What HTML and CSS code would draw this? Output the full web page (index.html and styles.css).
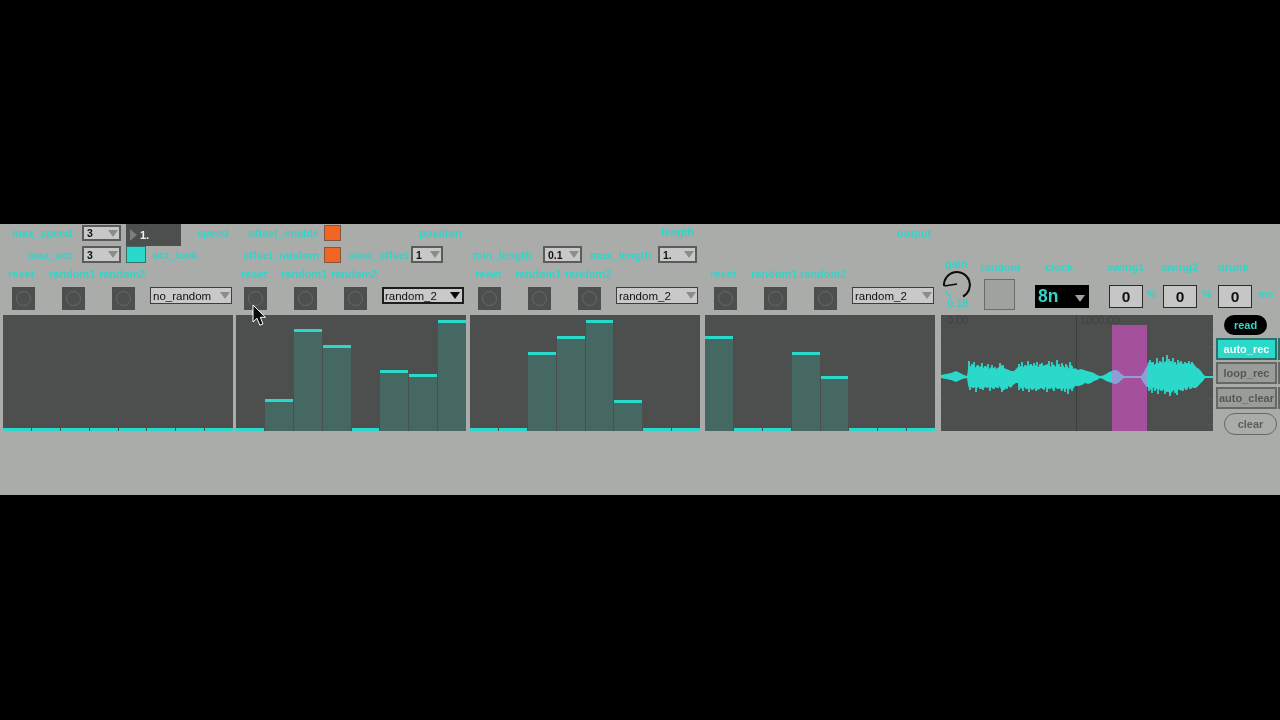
FILE: index.html
```html
<!DOCTYPE html>
<html lang="en">
<head>
<meta charset="utf-8">
<title>Sequencer patch</title>
<link rel="stylesheet" href="styles.css">
</head>
<body>
<main class="panel">
  <section class="seq s1">
    <div class="row-a">
      <span class="lab end">max_speed</span>
      <div class="sel small"><b>3</b><i class="arrow"></i></div>
      <div class="flonum"><i class="flo-tri"></i><b>1.</b></div>
      <span class="lab">speed</span>
    </div>
    <div class="row-b">
      <span class="lab end">max_oct</span>
      <div class="sel small"><b>3</b><i class="arrow"></i></div>
      <div class="toggle-on"></div>
      <span class="lab">oct_lock</span>
    </div>
    <div class="row-c"><span class="lab r0">reset</span><span class="lab r1">random1</span><span class="lab">random2</span></div>
    <div class="row-d">
      <div class="bang"><i></i></div><div class="bang"><i></i></div><div class="bang"><i></i></div>
      <div class="menu"><span>no_random</span><i class="arrow"></i></div>
    </div>
    <div class="chart">
      <div class="bar" style="height:3px"></div><div class="bar" style="height:3px"></div><div class="bar" style="height:3px"></div><div class="bar" style="height:3px"></div>
      <div class="bar" style="height:3px"></div><div class="bar" style="height:3px"></div><div class="bar" style="height:3px"></div><div class="bar" style="height:3px"></div>
    </div>
  </section>

  <section class="seq s2">
    <div class="row-a">
      <span class="lab end">offset_enable</span>
      <div class="orange"></div>
      <span class="lab">position</span>
    </div>
    <div class="row-b">
      <span class="lab end">offset_random</span>
      <div class="orange"></div>
      <span class="lab">slow_offset</span>
      <div class="sel tiny"><b>1</b><i class="arrow"></i></div>
    </div>
    <div class="row-c"><span class="lab r0">reset</span><span class="lab r1">random1</span><span class="lab">random2</span></div>
    <div class="row-d">
      <div class="bang"><i></i></div><div class="bang"><i></i></div><div class="bang"><i></i></div>
      <div class="menu active"><span>random_2</span><i class="arrow"></i></div>
    </div>
    <div class="chart">
      <div class="bar" style="height:3px"></div><div class="bar" style="height:32px"></div><div class="bar" style="height:102px"></div><div class="bar" style="height:86px"></div>
      <div class="bar" style="height:3px"></div><div class="bar" style="height:61px"></div><div class="bar" style="height:57px"></div><div class="bar" style="height:111px"></div>
    </div>
  </section>

  <section class="seq s3">
    <div class="row-a"><span class="lab">length</span></div>
    <div class="row-b">
      <span class="lab">min_length</span>
      <div class="sel small"><b>0.1</b><i class="arrow"></i></div>
      <span class="lab">max_length</span>
      <div class="sel small"><b>1.</b><i class="arrow"></i></div>
    </div>
    <div class="row-c"><span class="lab r0">reset</span><span class="lab r1">random1</span><span class="lab">random2</span></div>
    <div class="row-d">
      <div class="bang"><i></i></div><div class="bang"><i></i></div><div class="bang"><i></i></div>
      <div class="menu"><span>random_2</span><i class="arrow"></i></div>
    </div>
    <div class="chart">
      <div class="bar" style="height:3px"></div><div class="bar" style="height:3px"></div><div class="bar" style="height:79px"></div><div class="bar" style="height:95px"></div>
      <div class="bar" style="height:111px"></div><div class="bar" style="height:31px"></div><div class="bar" style="height:3px"></div><div class="bar" style="height:3px"></div>
    </div>
  </section>

  <section class="seq s4">
    <div class="row-a"><span class="lab">output</span></div>
    <div class="row-b"></div>
    <div class="row-c"><span class="lab r0">reset</span><span class="lab r1">random1</span><span class="lab">random2</span></div>
    <div class="row-d">
      <div class="bang"><i></i></div><div class="bang"><i></i></div><div class="bang"><i></i></div>
      <div class="menu"><span>random_2</span><i class="arrow"></i></div>
    </div>
    <div class="chart">
      <div class="bar" style="height:95px"></div><div class="bar" style="height:3px"></div><div class="bar" style="height:3px"></div><div class="bar" style="height:79px"></div>
      <div class="bar" style="height:55px"></div><div class="bar" style="height:3px"></div><div class="bar" style="height:3px"></div><div class="bar" style="height:3px"></div>
    </div>
  </section>

  <section class="master">
    <div class="strip">
      <div class="gain">
        <span class="lab">gain</span>
        <svg class="dial" viewBox="0 0 30 30" width="30" height="30" aria-hidden="true">
          <path d="M3.6 20.5A13 13 0 0 0 9 27" fill="none" stroke="#35d3c8" stroke-width="1.6"/>
          <path d="M2 16A13 13 0 1 1 21 26.5" fill="none" stroke="#0b0b0b" stroke-width="2"/>
          <path d="M2.5 16L15 14" stroke="#0b0b0b" stroke-width="1.6"/>
        </svg>
        <span class="lab val">0.18</span>
      </div>
      <div class="col">
        <span class="lab">random</span>
        <div class="rand-btn"></div>
      </div>
      <div class="col">
        <span class="lab clock-lab">clock</span>
        <div class="clock"><span>8n</span><i class="arrow"></i></div>
      </div>
      <div class="col"><span class="lab">swing1</span><div class="num inset">0</div></div>
      <span class="lab unit">%</span>
      <div class="col"><span class="lab">swing2</span><div class="num inset">0</div></div>
      <span class="lab unit">%</span>
      <div class="col"><span class="lab">drunk</span><div class="num">0</div></div>
      <span class="lab unit">ms</span>
    </div>
    <div class="lower">
      <svg class="wave" viewBox="0 0 272 116" width="272" height="116" aria-hidden="true">
        <defs>
          <g id="wf">
            <polygon points="0,60 5,59 10,58 15,56 19,58 23,60 26,61 27,54 28,49 30,52 32,50 34,53 36,50 38,52 40,51 43,53 45,51 48,54 50,52 53,53 55,54 58,52 60,50 62,52 65,54 68,55 70,56 73,56 75,54 77,52 80,51 83,52 85,50 87,52 89,49 91,51 94,50 97,52 100,49 102,51 104,50 107,49 110,52 112,49 114,52 117,49 119,52 122,50 124,53 126,50 128,54 130,49 132,54 134,53 137,55 140,54 143,55 146,56 150,57 153,58 156,60 159,61 162,60.5 165,59 168,57 171,56 174,55 177,56 180,59 183,61 200,61 201,60 203,57 205,53 206,52 207,47 209,48 211,47 213,50 215,48 218,48 221,47 223,50 225,45 227,48 229,46 231,49 233,47 235,50 237,47 240,48 243,49 246,48 249,49 252,48 255,52 258,54 260,56 262,59 264,61 272,61 272,63 264,63 262,66 260,68 258,70 255,73 252,72 250,74 248,71 246,75 243,73 240,76 238,74 235,78 233,75 231,77 229,79 227,76 225,77 222,74 220,76 217,73 214,75 212,72 210,75 207,72 206,72 205,71 203,68 201,65 200,63 183,63 180,65 177,68 174,69 171,68 168,67 165,66 162,64 159,63 156,65 153,66 150,68 147,69 144,68 141,70 138,71 134,71 132,74 130,72 128,75 126,73 124,76 122,73 120,75 118,73 116,74 114,72 112,75 110,72 107,74 105,72 102,74 100,73 97,75 94,73 92,75 89,73 86,74 83,72 80,74 77,68 75,68 72,70 70,73 67,71 64,74 62,75 60,74 58,71 56,73 54,72 52,74 50,72 48,73 46,71 43,73 41,74 38,72 36,73 34,72 32,73 30,72 28,73 27,70 26,63 23,63.5 19,65 15,67 10,65 5,64 0,63"/>
            <path class="wf-spikes" d="M28 46V56M31 49V56M33 47V56M37 50V56M41 48V56M44 51V56M47 49V56M51 50V56M54 52V56M59 48V56M62 50V56M78 49V56M81 47V56M84 50V56M87 46V56M90 49V56M93 48V56M96 47V56M99 49V56M101 48V56M105 50V56M108 46V56M111 47V56M113 50V56M116 45V56M118 49V56M121 48V56M125 49V56M129 47V56M131 51V56M209 45V56M212 47V56M216 43V56M219 46V56M222 42V56M224 47V56M226 40V56M228 44V56M230 46V56M232 43V56M234 47V56M237 45V56M240 46V56M244 47V56M248 46V56M251 47V56M29 68V75M32 68V73M35 68V77M39 68V74M42 68V75M46 68V73M49 68V76M53 68V74M57 68V73M61 68V77M63 68V75M66 68V74M78 68V75M82 68V76M85 68V74M88 68V77M91 68V75M95 68V76M98 68V74M103 68V75M106 68V77M109 68V74M113 68V76M117 68V74M121 68V76M124 68V77M127 68V79M129 68V74M131 68V76M208 68V76M211 68V78M214 68V76M217 68V79M221 68V76M224 68V79M227 68V77M229 68V81M231 68V76M234 68V78M236 68V80M239 68V75M242 68V76M245 68V75M249 68V74M253 68V73"/>
          </g>
          <clipPath id="sel"><rect x="171" y="10" width="35" height="106"/></clipPath>
        </defs>
        <rect width="272" height="116" fill="#4c4f4d"/>
        <path d="M0 19h5M0 32h5M0 45h5M0 58h5M0 71h5M0 84h5M0 97h5M0 110h5M267 19h5M267 32h5M267 45h5M267 58h5M267 71h5M267 84h5M267 97h5M267 110h5" stroke="#565957"/>
        <path d="M135.500 0V116" stroke="#3c3f3d"/>
        <text x="6" y="9" class="wave-t">0.00</text>
        <text x="139" y="9" class="wave-t">1000.00</text>
        <rect x="171" y="10" width="35" height="106" fill="#a5509c"/>
        <use href="#wf" class="wf-main"/>
        <use href="#wf" class="wf-sel" clip-path="url(#sel)"/>
      </svg>
      <div class="side">
        <div class="read">read</div>
        <div class="tog-row"><div class="tog on">auto_rec</div><i class="peek on"></i></div>
        <div class="tog-row"><div class="tog">loop_rec</div><i class="peek"></i></div>
        <div class="tog-row"><div class="tog">auto_clear</div><i class="peek"></i></div>
        <div class="clear">clear</div>
      </div>
    </div>
  </section>

  <svg class="cursor" viewBox="0 0 15 23" width="15" height="23" aria-hidden="true">
    <path d="M1 1V18L5 14.300L7.800 21.200L11 20L8.300 13.300H13.500Z" fill="#0b0b0b" stroke="#fff" stroke-width="1"/>
  </svg>
</main>
</body>
</html>
```
FILE: styles.css
```css
* { box-sizing: border-box; }
html, body { margin: 0; height: 100%; }
body { background: #000; overflow: hidden; font-family: "Liberation Sans", Arial, sans-serif; }

.panel {
  position: relative;
  display: flex;
  width: 1280px;
  height: 271px;
  margin-top: 224px;
  padding-left: 3px;
  background: #aaacaa;
  overflow: hidden;
  filter: blur(0.35px);
}

.lab {
  font-size: 11px;
  font-weight: 700;
  color: #35d3c8;
  white-space: nowrap;
  line-height: 18px;
}
.end { justify-self: end; padding-right: 5px; }

.seq { display: flex; flex-direction: column; flex: none; }
.s1 { width: 233px; }
.s2 { width: 234px; }
.s3 { width: 235px; }
.s4 { width: 236px; }

.row-a, .row-b { display: grid; align-items: start; }
.row-a { height: 22px; }
.row-b { height: 18px; }
.row-c { display: flex; height: 23px; padding: 1px 0 0 5px; }
.row-d { display: flex; height: 28px; gap: 27px; padding-left: 8px; align-items: flex-start; }
.r0 { width: 40px; }
.r1 { width: 50px; }

.s1 .row-a { grid-template-columns: 79px 44px 71px auto; }
.s1 .row-a .end, .s1 .row-b .end { padding-right: 10px; }
.s1 .row-b { grid-template-columns: 79px 44px 27px auto; }
.s1 .row-c .r0, .s4 .row-c .r0 { width: 41px; }
.s1 .row-d, .s4 .row-d { padding-left: 9px; }
.s4 .row-c .r1 { width: 49px; }

.s2 .row-a { grid-template-columns: 88px 95px auto; }
.s2 .row-b { grid-template-columns: 88px 24px 63px auto; }

.s3 .row-a { padding-left: 191px; }
.s3 .row-a .lab { line-height: 16px; }
.s3 .row-b { grid-template-columns: 70px 47px 68px auto; padding-left: 3px; }
.s4 .row-a { padding-left: 192px; }

.sel {
  display: flex;
  align-items: center;
  justify-content: space-between;
  height: 17px;
  padding: 0 1px 0 3px;
  background: #c8c8c8;
  border: 2px solid #5a5c5a;
  font-size: 10.5px;
  color: #111;
}
.small { width: 39px; }
.tiny { width: 32px; }
.row-a .sel { height: 16px; margin-top: 1px; }

.arrow {
  display: block;
  width: 0;
  height: 0;
  border-left: 5px solid transparent;
  border-right: 5px solid transparent;
  border-top: 7px solid #8b8d8b;
}

.flonum {
  display: flex;
  align-items: center;
  gap: 3px;
  width: 55px;
  height: 22px;
  padding: 0 0 1px 4px;
  background: #4c4f4d;
  color: #f2f2f2;
  font-size: 11px;
}
.flo-tri {
  width: 0;
  height: 0;
  border-top: 6px solid transparent;
  border-bottom: 6px solid transparent;
  border-left: 7px solid #7b7e7c;
}
.toggle-on { width: 20px; height: 17px; background: #2bd9cb; border: 1px solid #35706b; }
.orange { width: 17px; height: 16px; margin-top: 1px; background: #f36522; border: 1px solid #80573f; }

.bang {
  display: flex;
  align-items: center;
  justify-content: center;
  flex: none;
  width: 23px;
  height: 23px;
  background: #4c4f4d;
}
.bang i { display: block; width: 15px; height: 15px; border-radius: 50%; border: 1.5px solid #666967; }

.menu {
  display: flex;
  align-items: center;
  justify-content: space-between;
  flex: none;
  width: 82px;
  height: 17px;
  margin-left: -12px;
  padding: 0 1px 0 2px;
  background: #c9c9c9;
  border: 1px solid #3c3e3c;
  font-size: 11.500px;
  color: #111;
}
.menu.active { border: 2px solid #1c1d1c; padding: 0 2px 0 1px; }
.menu.active .arrow { border-top-color: #0b0b0b; }

.chart {
  display: flex;
  align-items: flex-end;
  gap: 1px;
  width: 230px;
  height: 116px;
  background: #4c4f4d;
}
.bar { flex: 1; background: #456863; border-top: 3px solid #2bd9cb; }

.master { flex: none; width: 339px; padding-top: 36px; }
.strip {
  display: grid;
  grid-template-columns: 39px 55px 72px 40px 14px 41px 16px 40px auto;
  height: 55px;
  align-items: start;
}
.lower { display: flex; }
.wave { display: block; flex: none; }
.wave-t { font-size: 11px; fill: #3f4240; font-family: "Liberation Sans", Arial, sans-serif; }
.wf-main { fill: #2bd9cb; stroke: #2bd9cb; }
.wf-sel { fill: #8f9ed6; stroke: #8f9ed6; }
.wf-spikes { fill: none; stroke-width: 1.8; }
#wf polygon { stroke: none; }

.col { display: flex; flex-direction: column; align-items: flex-start; }
.col .lab { line-height: 14px; }
.gain { display: flex; flex-direction: column; align-items: flex-start; margin-top: -3px; padding-left: 1px; }
.gain .lab { line-height: 14px; padding-left: 3px; }
.gain .val { line-height: 10px; margin-top: -2px; padding-left: 5px; }
.dial { display: block; margin-top: -1px; }
.rand-btn { width: 31px; height: 31px; margin: 5px 0 0 4px; background: #a0a2a0; border: 1px solid #6a6c6a; }
.clock {
  display: flex;
  align-items: center;
  justify-content: space-between;
  width: 54px;
  height: 23px;
  margin-top: 11px;
  padding: 0 4px 0 3px;
  background: #000;
  color: #35d3c8;
  font-size: 17.500px;
  font-weight: 700;
}
.clock .arrow { margin-top: 4px; border-top-color: #a0a2a0; }
.clock-lab { padding-left: 10px; }
.num {
  display: flex;
  align-items: center;
  justify-content: center;
  width: 34px;
  height: 23px;
  margin-top: 11px;
  background: #c6c6c6;
  border: 1px solid #2a2b2a;
  font-size: 15.500px;
  font-weight: 700;
  color: #111;
}
.inset { margin-left: 2px; }
.unit { margin-top: 27px; line-height: 14px; }

.side { display: flex; flex-direction: column; flex: none; padding-left: 3px; }
.read, .clear {
  display: flex;
  align-items: center;
  justify-content: center;
  font-size: 11px;
  font-weight: 700;
  border-radius: 11px;
}
.read { width: 43px; height: 20px; margin: 0 0 3px 8px; background: #000; color: #35d3c8; }
.clear { width: 53px; height: 22px; margin: 2px 0 0 8px; border: 1px solid #666866; color: #5d5f5d; }
.tog-row { display: flex; gap: 1px; margin-bottom: 2.400px; }
.tog {
  display: flex;
  align-items: center;
  justify-content: center;
  flex: none;
  width: 61px;
  height: 22px;
  background: #9a9c9a;
  border: 2px solid #666866;
  font-size: 11px;
  font-weight: 700;
  color: #555755;
  white-space: nowrap;
}
.tog.on { background: #2bd9cb; border-color: #2f6f6a; color: #f4f8f8; }
.peek { display: block; flex: none; width: 6px; height: 22px; background: #9a9c9a; border: 2px solid #666866; }
.peek.on { background: #2bd9cb; border-color: #2f6f6a; }

.cursor { position: absolute; left: 252px; top: 80px; }
```
